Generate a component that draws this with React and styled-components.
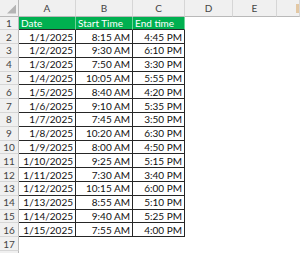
import React from "react";
import styled, { createGlobalStyle } from "styled-components";

const GlobalStyle = createGlobalStyle`
    html, body {
        margin: 0;
        padding: 0;
        background: #ffffff;
    }
    body {
        width: 300px;
        height: 253px;
        overflow: hidden;
        font-family: Lato, "Noto Sans", sans-serif;
    }
`;

const rows = [
    ["1/1/2025", "8:15 AM", "4:45 PM"],
    ["1/2/2025", "9:30 AM", "6:10 PM"],
    ["1/3/2025", "7:50 AM", "3:30 PM"],
    ["1/4/2025", "10:05 AM", "5:55 PM"],
    ["1/5/2025", "8:40 AM", "4:20 PM"],
    ["1/6/2025", "9:10 AM", "5:35 PM"],
    ["1/7/2025", "7:45 AM", "3:50 PM"],
    ["1/8/2025", "10:20 AM", "6:30 PM"],
    ["1/9/2025", "8:00 AM", "4:50 PM"],
    ["1/10/2025", "9:25 AM", "5:15 PM"],
    ["1/11/2025", "7:30 AM", "3:40 PM"],
    ["1/12/2025", "10:15 AM", "6:00 PM"],
    ["1/13/2025", "8:55 AM", "5:10 PM"],
    ["1/14/2025", "9:40 AM", "5:25 PM"],
    ["1/15/2025", "7:55 AM", "4:00 PM"],
];

const columns = ["A", "B", "C", "D", "E", ""];

const Sheet = styled.div`
    display: grid;
    grid-template-columns: 19px 57px 57px 52px 48px 44px 1fr;
    grid-template-rows: 16.5px repeat(18, 13.8px);
    width: 300px;
    font-size: 10px;
    color: #111111;
`;

const Corner = styled.div`
    position: relative;
    background: #f0f0f0;
    border-right: 1px solid #b9b9b9;
    border-bottom: 1px solid #b9b9b9;
    box-sizing: border-box;

    &::after {
        content: "";
        position: absolute;
        right: 2px;
        bottom: 2px;
        width: 9px;
        height: 9px;
        background: #b4b4b4;
        clip-path: polygon(100% 0, 100% 100%, 0 100%);
    }
`;

const ColHeader = styled.div`
    display: flex;
    align-items: center;
    justify-content: center;
    background: #f0f0f0;
    color: #444444;
    border-right: 1px solid #d6d6d6;
    border-bottom: 1px solid #b9b9b9;
    box-sizing: border-box;
    padding-top: 1px;
`;

const Tab = styled.span`
    margin-left: auto;
    width: 3px;
    height: 9px;
    background: #e3c8a4;
`;

const RowHeader = styled.div`
    display: flex;
    align-items: center;
    justify-content: center;
    background: #f0f0f0;
    color: #444444;
    border-right: 1px solid #b9b9b9;
    border-bottom: 1px solid #d6d6d6;
    box-sizing: border-box;
`;

const Cell = styled.div`
    display: flex;
    align-items: center;
    justify-content: ${({ $head }) => ($head ? "flex-start" : "flex-end")};
    padding: 0 2px;
    box-sizing: border-box;
    white-space: nowrap;
    overflow: hidden;
    background: ${({ $head }) => ($head ? "#00b050" : "#ffffff")};
    color: ${({ $head }) => ($head ? "#ffffff" : "#111111")};
    border-right: 1px solid ${({ $head }) => ($head ? "#6fd49a" : "#262626")};
    border-bottom: 1px solid #262626;
`;

const Blank = styled.div`
    background: #ffffff;
`;

const App = () => {
    const header = ["Date", "Start Time", "End time"];

    return (
        <>
            <GlobalStyle />
            <Sheet>
                <Corner />
                {columns.map((col, i) => (
                    <ColHeader key={`c${i}`}>
                        {col}
                        {i === columns.length - 1 && <Tab />}
                    </ColHeader>
                ))}

                <RowHeader>1</RowHeader>
                {header.map((h) => (
                    <Cell $head key={h}>
                        {h}
                    </Cell>
                ))}
                <Blank />
                <Blank />
                <Blank />

                {rows.map((row, r) => (
                    <React.Fragment key={r}>
                        <RowHeader>{r + 2}</RowHeader>
                        {row.map((v, c) => (
                            <Cell key={c}>{v}</Cell>
                        ))}
                        <Blank />
                        <Blank />
                        <Blank />
                    </React.Fragment>
                ))}

                {["17", ""].map((n, i) => (
                    <React.Fragment key={`e${i}`}>
                        <RowHeader>{n}</RowHeader>
                        <Blank />
                        <Blank />
                        <Blank />
                        <Blank />
                        <Blank />
                        <Blank />
                    </React.Fragment>
                ))}
            </Sheet>
        </>
    );
};

export default App;
